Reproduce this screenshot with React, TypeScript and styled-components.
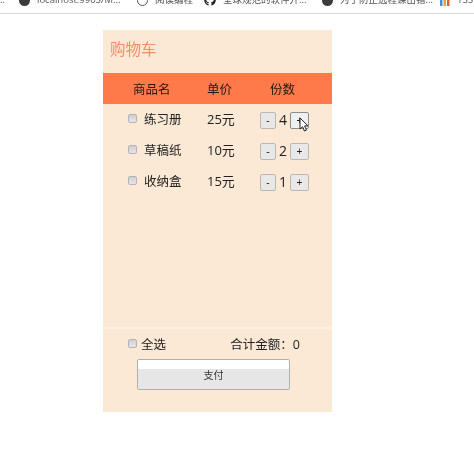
import React from "react";
import styled, { createGlobalStyle } from "styled-components";
import { FaGithub } from "react-icons/fa";

const Global = createGlobalStyle`
  html, body { margin: 0; padding: 0; background: #fff; }
  body { font-family: "Open Sans", "Noto Sans CJK SC", sans-serif; color: #222; overflow: hidden; }
`;

const Page = styled.div`
  width: 474px;
  height: 454px;
  overflow: hidden;
  filter: blur(0.3px);
`;

const Bookmarks = styled.div`
  height: 14px;
  box-sizing: border-box;
  border-bottom: 1px solid #d8d9da;
  overflow: hidden;
  display: flex;
  align-items: flex-end;
  padding: 0 0 8px 0;
  font-size: 9.5px;
  line-height: 10px;
  color: #555;
  white-space: nowrap;
`;

const Bookmark = styled.span<{ $width: number }>`
  display: inline-flex;
  align-items: flex-end;
  gap: 7px;
  flex: none;
  width: ${(p) => p.$width}px;
`;

const Favicon = styled.span<{ $outline?: boolean }>`
  width: 11px;
  height: 11px;
  margin-bottom: -1px;
  border-radius: 50%;
  flex: none;
  background: ${(p) => (p.$outline ? "#fff" : "#3c3c3c")};
  border: ${(p) => (p.$outline ? "1px solid #555" : "none")};
  box-sizing: border-box;
`;

const GithubMark = styled(FaGithub)`
  width: 12px;
  height: 12px;
  margin-bottom: -1px;
  flex: none;
  color: #222;
`;

const ChartMark = styled.svg`
  width: 11px;
  height: 11px;
  margin-bottom: -1px;
  flex: none;
`;

const Cart = styled.main`
  width: 229px;
  height: 382px;
  margin: 16px 0 0 103px;
  background: #fbe9d6;
  display: flex;
  flex-direction: column;
`;

const Title = styled.h1`
  margin: 0;
  height: 43px;
  box-sizing: border-box;
  padding: 8px 0 0 7px;
  font-size: 15.5px;
  line-height: 22px;
  font-weight: 400;
  color: #f98c66;
`;

const Columns = styled.div`
  display: grid;
  grid-template-columns: 104px 53px 72px;
  align-items: center;
`;

const Head = styled(Columns)`
  height: 31px;
  background: #ff7a4a;
  font-size: 12.5px;
  color: #1f1a16;
`;

const HeadName = styled.span`
  padding-left: 30px;
`;

const HeadCount = styled.span`
  padding-left: 10px;
`;

const Rows = styled.div`
  flex: 1;
`;

const Row = styled(Columns)`
  height: 31px;
  box-sizing: border-box;
  padding-bottom: 2px;
  font-size: 12.5px;
`;

const NameCell = styled.div`
  display: flex;
  align-items: center;
  padding-left: 25px;
  gap: 7px;
`;

const Check = styled.span`
  width: 9px;
  height: 9px;
  flex: none;
  box-sizing: border-box;
  border: 1px solid #b4b4b8;
  border-radius: 2px;
  background: linear-gradient(#cfcfd3, #e6e6e8);
`;

const Price = styled.span`
  font-size: 13px;
`;

const Stepper = styled.div`
  display: flex;
  align-items: center;
  margin-top: 4px;
`;

const StepButton = styled.button<{ $wide?: boolean; $hover?: boolean }>`
  width: ${(p) => (p.$wide ? "19px" : "16px")};
  height: 17px;
  padding: 0;
  box-sizing: border-box;
  border: 1px solid ${(p) => (p.$hover ? "#8f8d8a" : "#bbb8b4")};
  border-radius: 2px;
  background: ${(p) => (p.$hover ? "#eef0f2" : "#e8e8e8")};
  font: 400 10px/13px "Liberation Sans", sans-serif;
  color: #222;
  position: relative;
`;

const Count = styled.span`
  width: 14px;
  text-align: center;
  font-size: 14px;
  line-height: 17px;
  position: relative;
  top: -1px;
`;

const Pointer = styled.svg`
  position: absolute;
  left: 8px;
  top: 4px;
  width: 11px;
  height: 15px;
  pointer-events: none;
`;

const Footer = styled.footer`
  height: 85px;
  box-sizing: border-box;
  border-top: 2px solid #fdf1e4;
  display: flex;
  flex-direction: column;
  font-size: 12.5px;
`;

const Summary = styled.div`
  height: 30px;
  box-sizing: border-box;
  display: flex;
  align-items: center;
  padding: 0 32px 2px 25px;
`;

const AllLabel = styled.label`
  display: flex;
  align-items: center;
  gap: 4px;
  flex: 1;
`;

const Total = styled.span`
  color: #222;
`;

const PayButton = styled.button`
  width: 153px;
  height: 31px;
  margin-left: 34px;
  padding: 0;
  box-sizing: border-box;
  border: 1px solid #b3b0ac;
  border-radius: 2px;
  background: linear-gradient(#ffffff 0, #ffffff 30%, #e6e6e6 32%, #e6e6e6 100%);
  font-family: "Open Sans", "Noto Sans CJK SC", sans-serif;
  font-size: 10px;
  color: #333;
`;

const items = [
  { name: "练习册", price: "25元", count: 4 },
  { name: "草稿纸", price: "10元", count: 2 },
  { name: "收纳盒", price: "15元", count: 1 },
];

export default function App() {
  return (
    <Page>
      <Global />
      <Bookmarks>
        <Bookmark $width={19}>..</Bookmark>
        <Bookmark $width={118}><Favicon />localhost:9905/M...</Bookmark>
        <Bookmark $width={67}><Favicon $outline />阅读编程</Bookmark>
        <Bookmark $width={118}><GithubMark />全球规范的软件开...</Bookmark>
        <Bookmark $width={117}><Favicon />为了防止远程课出错...</Bookmark>
        <Bookmark $width={35}>
          <ChartMark viewBox="0 0 11 11">
            <rect x="1" y="2" width="2.5" height="9" fill="#4a90d9" />
            <rect x="4.5" y="0" width="2.5" height="11" fill="#f0a030" />
            <rect x="8" y="3" width="2.5" height="8" fill="#e2603a" />
          </ChartMark>
          155
        </Bookmark>
      </Bookmarks>
      <Cart>
        <Title>购物车</Title>
        <Head>
          <HeadName>商品名</HeadName>
          <span>单价</span>
          <HeadCount>份数</HeadCount>
        </Head>
        <Rows>
          {items.map((item, i) => (
            <Row key={item.name}>
              <NameCell>
                <Check />
                <span>{item.name}</span>
              </NameCell>
              <Price>{item.price}</Price>
              <Stepper>
                <StepButton>-</StepButton>
                <Count>{item.count}</Count>
                <StepButton $wide $hover={i === 0}>
                  +
                  {i === 0 && (
                    <Pointer viewBox="0 0 11 15">
                      <path d="M1 1v11l2.6-2.3L5.4 14l2-.9-1.8-4.2H9z" fill="#fff" stroke="#222" strokeWidth="1" />
                    </Pointer>
                  )}
                </StepButton>
              </Stepper>
            </Row>
          ))}
        </Rows>
        <Footer>
          <Summary>
            <AllLabel><Check />全选</AllLabel>
            <Total>合计金额：0</Total>
          </Summary>
          <PayButton>支付</PayButton>
        </Footer>
      </Cart>
    </Page>
  );
}
